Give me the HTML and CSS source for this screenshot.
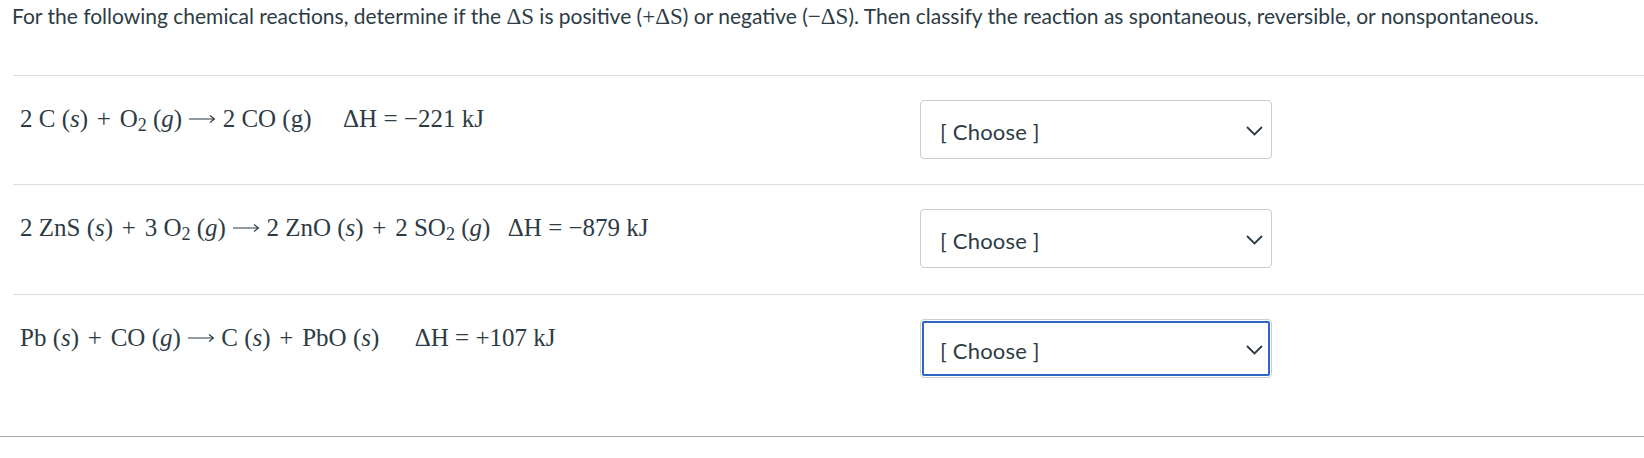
FILE: index.html
```html
<!DOCTYPE html>
<html>
<head>
<meta charset="utf-8">
<link rel="stylesheet" href="styles.css">
</head>
<body>
<div class="page">
  <div class="question">
    <p class="prompt">For the following chemical reactions, determine if the <span class="m">ΔS</span> is positive (<span class="m">+ΔS</span>) or negative (<span class="m">−ΔS</span>). Then classify the reaction as spontaneous, reversible, or nonspontaneous.</p>
    <div class="rows">
      <div class="row">
        <div class="eq">2 C (<i>s</i>) <span class="op">+</span> O<sub>2</sub> (<i>g</i>) <svg class="arrow" width="28" height="10" viewBox="0 0 28 10"><path d="M1 5H26.5M22 1.5L26.5 5L22 8.5" fill="none" stroke="#2d3b45" stroke-width="1.1"/></svg> 2 CO (g)<span class="gap1"></span><span class="dh">ΔH <span class="eqop">=</span> −221 kJ</span></div>
        <div class="select"><span class="choose">[ Choose ]</span><svg class="chev" width="17" height="10" viewBox="0 0 17 10"><polyline points="1,1 8.5,8.5 16,1" fill="none" stroke="#2d3b45" stroke-width="1.8"/></svg></div>
      </div>
      <div class="row">
        <div class="eq">2 ZnS (<i>s</i>) <span class="op">+</span> 3 O<sub>2</sub> (<i>g</i>) <svg class="arrow" width="28" height="10" viewBox="0 0 28 10"><path d="M1 5H26.5M22 1.5L26.5 5L22 8.5" fill="none" stroke="#2d3b45" stroke-width="1.1"/></svg> 2 ZnO (<i>s</i>) <span class="op">+</span> 2 SO<sub>2</sub> (<i>g</i>)<span class="gap2"></span><span class="dh">ΔH <span class="eqop">=</span> −879 kJ</span></div>
        <div class="select"><span class="choose">[ Choose ]</span><svg class="chev" width="17" height="10" viewBox="0 0 17 10"><polyline points="1,1 8.5,8.5 16,1" fill="none" stroke="#2d3b45" stroke-width="1.8"/></svg></div>
      </div>
      <div class="row">
        <div class="eq">Pb (<i>s</i>) <span class="op">+</span> CO (<i>g</i>) <svg class="arrow" width="28" height="10" viewBox="0 0 28 10"><path d="M1 5H26.5M22 1.5L26.5 5L22 8.5" fill="none" stroke="#2d3b45" stroke-width="1.1"/></svg> C (<i>s</i>) <span class="op">+</span> PbO (<i>s</i>)<span class="gap3"></span><span class="dh">ΔH <span class="eqop">=</span> +107 kJ</span></div>
        <div class="select focused"><span class="choose">[ Choose ]</span><svg class="chev" width="17" height="10" viewBox="0 0 17 10"><polyline points="1,1 8.5,8.5 16,1" fill="none" stroke="#2d3b45" stroke-width="1.8"/></svg></div>
      </div>
    </div>
  </div>
  <div class="footer-line"></div>
</div>
</body>
</html>
```
FILE: styles.css
```css
html, body {
  margin: 0;
  padding: 0;
  background: #ffffff;
  overflow: hidden;
}
.page {
  width: 1644px;
  color: #2d3b45;
  font-family: Lato, "Noto Sans", sans-serif;
}
.question {
  padding-left: 12px;
}
.prompt {
  margin: 0;
  padding-top: 3px;
  height: 75px;
  font-size: 21px;
  line-height: 25px;
  box-sizing: border-box;
  white-space: nowrap;
}
.m {
  font-family: "Liberation Serif", serif;
  font-size: 23px;
}
.rows {
  margin-left: 1px;
}
.row {
  display: flex;
  align-items: flex-start;
  border-top: 1px solid #dcdcdc;
  padding: 24px 0 25px;
  height: 109px;
  box-sizing: border-box;
}
.row + .row {
  height: 110px;
}
.eq {
  width: 907px;
  padding-top: 5px;
  padding-left: 7px;
  font-family: "Liberation Serif", serif;
  font-size: 25px;
  line-height: 28px;
  color: #2d3b45;
  white-space: nowrap;
  box-sizing: border-box;
}
.eq i {
  font-style: italic;
}
.eq sub {
  font-size: 18px;
  vertical-align: -4px;
  line-height: 0;
}
.arrow {
  display: inline-block;
  vertical-align: 3px;
}
.op {
  margin: 0 2.5px;
}
.gap1 { display: inline-block; width: 31.5px; }
.gap2 { display: inline-block; width: 17.4px; }
.gap3 { display: inline-block; width: 35.4px; }
.select {
  width: 352px;
  height: 59px;
  border: 1px solid #c7cdd1;
  border-radius: 4px;
  box-sizing: border-box;
  display: flex;
  align-items: center;
  justify-content: space-between;
  padding: 0 8px 0 19px;
  font-size: 22px;
  letter-spacing: 0.2px;
  color: #2d3b45;
}
.choose {
  margin-top: 3px;
}
.chev {
  display: block;
  margin-top: 2px;
}
.select.focused {
  outline: 2.5px solid #2d64c8;
  outline-offset: -4px;
}
.footer-line {
  margin-top: 32px;
  height: 1px;
  background: #a8a8a8;
}
```
